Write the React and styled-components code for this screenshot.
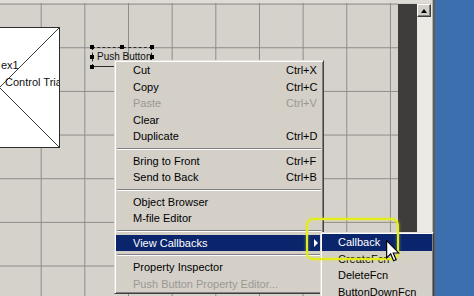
import styled, { createGlobalStyle } from "styled-components";

const GlobalStyle = createGlobalStyle`
  html, body {
    margin: 0;
    padding: 0;
    overflow: hidden;
    background: #3b6fae;
  }
  body {
    font-family: "Liberation Sans", Arial, sans-serif;
  }
`;

const Screen = styled.div`
  position: relative;
  display: flex;
  width: 474px;
  height: 296px;
  overflow: hidden;
`;

const Window = styled.div`
  display: flex;
  flex-direction: column;
  width: 432px;
  background: #d5d2cc;
`;

const FrameEdge = styled.div`
  width: 3px;
  background: linear-gradient(to right, #b3b1ac 0 1px, #5f5e5b 1px 3px);
`;

const Desktop = styled.div`
  flex: 1;
  background: #3b6fae;
`;

const TopStrip = styled.div`
  height: 3px;
  background: #dedbd5;
`;

const Body = styled.div`
  flex: 1;
  display: flex;
`;

const Canvas = styled.div`
  position: relative;
  width: 398px;
  overflow: hidden;
  background-color: #d5d2cc;
  background-image:
    linear-gradient(to right, #8e8c87 0 1px, transparent 1px),
    linear-gradient(to bottom, #8e8c87 0 1px, transparent 1px);
  background-size: 43.66px 43.66px;
  background-position: 40.7px 0.6px;
`;

const DarkBar = styled.div`
  width: 19px;
  margin-top: 1px;
  background: #3e3d3b;
`;

const ScrollTrack = styled.div`
  width: 15px;
  margin-top: 1px;
  background: #eceae5;
`;

const UpButton = styled.div`
  display: flex;
  align-items: center;
  justify-content: center;
  width: 14px;
  height: 13px;
  box-sizing: border-box;
  background: #d4d0c8;
  border: 1px solid;
  border-color: #fff #404040 #404040 #fff;
  box-shadow: inset -1px -1px 0 #808080;

  &::after {
    content: "";
    border-left: 3.5px solid transparent;
    border-right: 3.5px solid transparent;
    border-bottom: 4px solid #000;
  }
`;

const Frame = styled.div`
  position: absolute;
  left: -61px;
  top: 24px;
  width: 121px;
  height: 121px;
  box-sizing: border-box;
  overflow: hidden;
  border: 1px solid #2c2c2c;
  padding-top: 29px;
  background:
    linear-gradient(to top right, transparent calc(50% - 0.7px), #3a3a3a 50%, transparent calc(50% + 0.7px)),
    linear-gradient(to bottom right, transparent calc(50% - 0.7px), #3a3a3a 50%, transparent calc(50% + 0.7px)),
    #fff;
`;

const FrameLabel = styled.div`
  padding-left: ${(p) => p.$indent}px;
  font-size: 11px;
  line-height: 17px;
  color: #111;
  white-space: nowrap;
`;

const Selection = styled.div`
  position: absolute;
  left: 92px;
  top: 44px;
  width: 60px;
  height: 20px;
  box-sizing: border-box;
  border: 1px dashed #2a2a2a;
  border-bottom-style: solid;
  padding: 3px 0 0 4px;
  font-size: 10px;
  line-height: 12px;
  color: #111;
  white-space: nowrap;
`;

const Handle = styled.span`
  position: absolute;
  left: ${(p) => p.$x}px;
  top: ${(p) => p.$y}px;
  width: 4px;
  height: 4px;
  background: #000;
`;

const Menu = styled.div`
  position: absolute;
  left: ${(p) => p.$x}px;
  top: ${(p) => p.$y}px;
  width: ${(p) => p.$w}px;
  box-sizing: border-box;
  padding: 1px;
  background: #d4d0c8;
  border: 1px solid;
  border-color: #e2e0da #404040 #404040 #e2e0da;
  box-shadow: inset 1px 1px 0 #fff, inset -1px -1px 0 #808080;
  font-size: 11px;
`;

const Item = styled.div`
  display: flex;
  align-items: center;
  height: 16.5px;
  padding-left: ${(p) => p.$pad || 17}px;
  color: ${(p) => (p.$disabled ? "#9a9893" : p.$active ? "#fff" : "#000")};
  background: ${(p) => (p.$active ? "#0b256c" : "transparent")};
  white-space: nowrap;
`;

const Label = styled.span`
  flex: 1;
`;

const Shortcut = styled.span`
  width: 36px;
`;

const SubArrow = styled.span`
  margin-right: 4px;
  border-top: 4px solid transparent;
  border-bottom: 4px solid transparent;
  border-left: 4px solid #fff;
`;

const Separator = styled.div`
  height: 2px;
  margin: 3px 1px;
  background: linear-gradient(to bottom, #808080 0 1px, #fff 1px 2px);
`;

const Highlight = styled.div`
  position: absolute;
  left: 306px;
  top: 218px;
  width: 93px;
  height: 42px;
  box-sizing: border-box;
  border: 2.5px solid #e3ed1c;
  border-radius: 7px;
  box-shadow: 0 0 3px rgba(232, 240, 40, 0.7), inset 0 0 3px rgba(232, 240, 40, 0.6);
`;

const Cursor = styled.svg`
  position: absolute;
  left: 386px;
  top: 240px;
`;

const mainItems = [
  { label: "Cut", key: "Ctrl+X" },
  { label: "Copy", key: "Ctrl+C" },
  { label: "Paste", key: "Ctrl+V", disabled: true },
  { label: "Clear" },
  { label: "Duplicate", key: "Ctrl+D" },
  "sep",
  { label: "Bring to Front", key: "Ctrl+F" },
  { label: "Send to Back", key: "Ctrl+B" },
  "sep",
  { label: "Object Browser" },
  { label: "M-file Editor" },
  "sep",
  { label: "View Callbacks", active: true, sub: true },
  "sep",
  { label: "Property Inspector" },
  { label: "Push Button Property Editor...", disabled: true },
];

const subItems = [
  { label: "Callback", active: true },
  { label: "CreateFcn" },
  { label: "DeleteFcn" },
  { label: "ButtonDownFcn" },
];

export default function App() {
  return (
    <>
      <GlobalStyle />
      <Screen>
        <Window>
          <TopStrip />
          <Body>
            <Canvas>
              <Frame>
                <FrameLabel $indent={61}>ex1</FrameLabel>
                <FrameLabel $indent={65}>Control Trial</FrameLabel>
              </Frame>
              <Selection>
                Push Button
                <Handle $x={-3} $y={-3} />
                <Handle $x={27} $y={-3} />
                <Handle $x={57} $y={-3} />
                <Handle $x={-3} $y={7} />
                <Handle $x={-3} $y={17} />
                <Handle $x={57} $y={7} />
              </Selection>
            </Canvas>
            <DarkBar />
            <ScrollTrack>
              <UpButton />
            </ScrollTrack>
          </Body>
        </Window>
        <FrameEdge />
        <Desktop />

        <Menu $x={114} $y={60} $w={210}>
          {mainItems.map((it, i) =>
            it === "sep" ? (
              <Separator key={i} />
            ) : (
              <Item key={i} $disabled={it.disabled} $active={it.active}>
                <Label>{it.label}</Label>
                {it.key && <Shortcut>{it.key}</Shortcut>}
                {it.sub && <SubArrow />}
              </Item>
            )
          )}
        </Menu>

        <Menu $x={320} $y={232} $w={114}>
          {subItems.map((it) => (
            <Item key={it.label} $pad={16} $active={it.active}>
              <Label>{it.label}</Label>
            </Item>
          ))}
        </Menu>

        <Highlight />

        <Cursor width="14" height="22" viewBox="0 0 12 19">
          <path
            d="M0.5 0.5 L0.5 15.5 L4 12 L6.5 18 L8.7 17 L6.2 11.2 L11 11.2 Z"
            fill="#fff"
            stroke="#000"
            strokeWidth="1"
            strokeLinejoin="miter"
          />
        </Cursor>
      </Screen>
    </>
  );
}
